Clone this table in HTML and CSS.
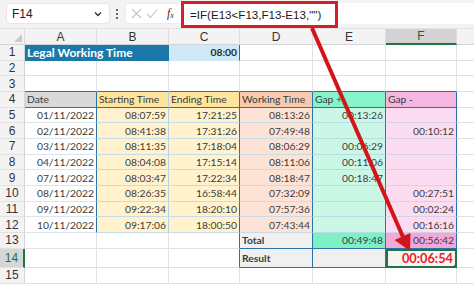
FILE: index.html
```html
<!DOCTYPE html>
<html>
<head>
<meta charset="utf-8">
<link rel="stylesheet" href="styles.css">
</head>
<body>
<div class="app">
  <div class="fbar">
    <div class="namebox">
      <span class="nb-text">F14</span>
      <svg class="chev" width="8" height="6" viewBox="0 0 8 6"><path d="M1 1.5 L4 4.5 L7 1.5" fill="none" stroke="#333" stroke-width="1.4"/></svg>
    </div>
    <svg class="dots" width="4" height="12" viewBox="0 0 4 12"><circle cx="2" cy="2" r="1.1" fill="#444"/><circle cx="2" cy="6" r="1.1" fill="#444"/><circle cx="2" cy="10" r="1.1" fill="#444"/></svg>
    <div class="fxbox">
      <svg width="11" height="11" viewBox="0 0 11 11"><path d="M1 1 L10 10 M10 1 L1 10" stroke="#c4c4c4" stroke-width="1.1"/></svg>
      <svg width="12" height="11" viewBox="0 0 12 11"><path d="M1 6 L4.5 9.5 L11 1.5" fill="none" stroke="#c4c4c4" stroke-width="1.1"/></svg>
      <span class="fx">f<sub>x</sub></span>
    </div>
    <div class="formula">
      <div class="hl"><span class="ftext">=IF(E13&lt;F13,F13-E13,"")</span></div>
    </div>
  </div>

  <div class="sheet">
    <!-- column headers -->
    <div class="corner"><svg width="8" height="8" viewBox="0 0 8 8"><path d="M8 0 L8 8 L0 8 Z" fill="#c9c9c9"/></svg></div>
    <div class="ch">A</div><div class="ch">B</div><div class="ch">C</div><div class="ch">D</div><div class="ch">E</div><div class="ch sel">F</div><div class="ch last"></div>

    <!-- row 1 -->
    <div class="rh">1</div>
    <div class="c title span2">Legal Working Time</div>
    <div class="c lt r b bR">08:00</div>
    <div class="c"></div><div class="c"></div><div class="c"></div><div class="c last"></div>

    <!-- row 2 -->
    <div class="rh">2</div>
    <div class="c"></div><div class="c"></div><div class="c"></div><div class="c"></div><div class="c"></div><div class="c"></div><div class="c last"></div>

    <!-- row 3 -->
    <div class="rh">3</div>
    <div class="c bB"></div><div class="c bB"></div><div class="c bB"></div><div class="c bB"></div><div class="c bB"></div><div class="c bB"></div><div class="c last"></div>

    <!-- row 4 -->
    <div class="rh">4</div>
    <div class="c hdA bR bB">Date</div>
    <div class="c hdY lR bB">Starting Time</div>
    <div class="c hdY bR bB">Ending Time</div>
    <div class="c hdO bR bB">Working Time</div>
    <div class="c hdG bR bB">Gap +</div>
    <div class="c hdP bR bB">Gap -</div>
    <div class="c last"></div>

    <!-- data rows -->
    <div class="rh">5</div>
    <div class="c dA r bR">01/11/2022</div><div class="c dY r lR">08:07:59</div><div class="c dY r bR">17:21:25</div><div class="c dO r bR">08:13:26</div><div class="c dG r bR">00:13:26</div><div class="c dP r bR"></div><div class="c last"></div>

    <div class="rh">6</div>
    <div class="c dA r bR">02/11/2022</div><div class="c dY r lR">08:41:38</div><div class="c dY r bR">17:31:26</div><div class="c dO r bR">07:49:48</div><div class="c dG r bR"></div><div class="c dP r bR">00:10:12</div><div class="c last"></div>

    <div class="rh">7</div>
    <div class="c dA r bR">03/11/2022</div><div class="c dY r lR">08:11:35</div><div class="c dY r bR">17:18:04</div><div class="c dO r bR">08:06:29</div><div class="c dG r bR">00:06:29</div><div class="c dP r bR"></div><div class="c last"></div>

    <div class="rh">8</div>
    <div class="c dA r bR">04/11/2022</div><div class="c dY r lR">08:04:08</div><div class="c dY r bR">17:15:14</div><div class="c dO r bR">08:11:06</div><div class="c dG r bR">00:11:06</div><div class="c dP r bR"></div><div class="c last"></div>

    <div class="rh">9</div>
    <div class="c dA r bR">07/11/2022</div><div class="c dY r lR">08:03:47</div><div class="c dY r bR">17:22:34</div><div class="c dO r bR">08:18:47</div><div class="c dG r bR">00:18:47</div><div class="c dP r bR"></div><div class="c last"></div>

    <div class="rh">10</div>
    <div class="c dA r bR">08/11/2022</div><div class="c dY r lR">08:26:35</div><div class="c dY r bR">16:58:44</div><div class="c dO r bR">07:32:09</div><div class="c dG r bR"></div><div class="c dP r bR">00:27:51</div><div class="c last"></div>

    <div class="rh">11</div>
    <div class="c dA r bR">09/11/2022</div><div class="c dY r lR">09:22:34</div><div class="c dY r bR">18:20:10</div><div class="c dO r bR">07:57:36</div><div class="c dG r bR"></div><div class="c dP r bR">00:02:24</div><div class="c last"></div>

    <div class="rh">12</div>
    <div class="c dA r bR bB">10/11/2022</div><div class="c dY r lR bB">09:17:06</div><div class="c dY r bR bB">18:00:50</div><div class="c dO r bR bB">07:43:44</div><div class="c dG r bR bB"></div><div class="c dP r bR bB">00:16:16</div><div class="c last"></div>

    <!-- row 13 -->
    <div class="rh">13</div>
    <div class="c"></div><div class="c"></div><div class="c bR"></div>
    <div class="c gr b bR bB">Total</div>
    <div class="c tG r bR bB">00:49:48</div>
    <div class="c tP r bR bB">00:56:42</div>
    <div class="c last"></div>

    <!-- row 14 -->
    <div class="rh rsel">14</div>
    <div class="c"></div><div class="c"></div><div class="c bR"></div>
    <div class="c gr b bR bB">Result</div>
    <div class="c gr2 bR bB"></div>
    <div class="c res r">00:06:54<span class="handle"></span></div>
    <div class="c last"></div>

    <!-- row 15 -->
    <div class="rh">15</div>
    <div class="c"></div><div class="c"></div><div class="c"></div><div class="c"></div><div class="c"></div><div class="c"></div><div class="c last"></div>
  </div>

  <svg class="arrow" width="474" height="284" viewBox="0 0 474 284">
    <line x1="312" y1="28" x2="403" y2="237" stroke="#d3141b" stroke-width="4"/>
    <polygon points="410,251 410.5,233 394.5,240" fill="#d3141b"/>
  </svg>
</div>
</body>
</html>
```
FILE: styles.css
```css
* { box-sizing: border-box; }
html, body { margin: 0; padding: 0; }
body {
  width: 474px;
  height: 284px;
  overflow: hidden;
  background: #ffffff;
  font-family: "Liberation Sans", Arial, sans-serif;
}
.app {
  position: relative;
  width: 474px;
  height: 284px;
}

/* formula bar */
.fbar {
  height: 29px;
  background: #f3f3f3;
  display: flex;
  align-items: flex-start;
  padding-top: 3px;
  border-bottom: 1px solid #e3e3e3;
}
.namebox {
  margin-left: 6px;
  width: 104px;
  height: 21px;
  background: #ffffff;
  border: 1px solid #e6e6e6;
  border-radius: 4px;
  display: flex;
  align-items: center;
  justify-content: space-between;
  padding: 0 7px 0 5px;
  font-size: 12px;
  color: #222;
}
.chev { margin-top: 1px; }
.dots {
  margin: 5px 6px 0 5px;
}
.fxbox {
  width: 56px;
  height: 21px;
  background: #ffffff;
  border: 1px solid #ececec;
  border-right: none;
  border-radius: 4px 0 0 4px;
  display: flex;
  align-items: center;
  gap: 4px;
  padding-left: 5px;
}
.fx {
  font-family: "Liberation Serif", "DejaVu Serif", serif;
  font-style: italic;
  font-size: 12px;
  color: #333;
  margin-left: 5px;
}
.fx sub { font-size: 8px; vertical-align: -1px; }
.formula {
  flex: 1;
  height: 21px;
  background: #ffffff;
  position: relative;
}
.hl {
  position: absolute;
  left: 0;
  top: -2px;
  width: 157px;
  height: 27px;
  border: 3px solid #d41f26;
  background: #ffffff;
  display: flex;
  align-items: center;
  padding-left: 6px;
}
.ftext {
  font-size: 11.6px;
  color: #1a1a1a;
  white-space: nowrap;
}

/* sheet grid */
.sheet {
  display: grid;
  grid-template-columns: 25px 72px 72px 71px 73px 73px 71px 17px;
  grid-template-rows: 16px repeat(13, 15.67px) 19px 1fr;
  height: 255px;
  font-family: Lato, "Open Sans", sans-serif;
  font-size: 10.3px;
  color: #3b3b3b;
}
.corner {
  background: #f3f3f3;
  border-right: 1px solid #dedede;
  border-bottom: 1px solid #d4d4d4;
  display: flex;
  align-items: flex-end;
  justify-content: flex-end;
  padding: 0 2px 2px 0;
}
.ch {
  background: #f3f3f3;
  border-right: 1px solid #dedede;
  border-bottom: 1px solid #d4d4d4;
  font-family: "Liberation Sans", Arial, sans-serif;
  font-size: 12px;
  color: #333;
  display: flex;
  align-items: center;
  justify-content: center;
}
.ch.sel {
  background: #d3d3d3;
  border-bottom: 2px solid #217346;
  color: #1f5e3c;
}
.ch.last { border-right: none; }
.rh {
  background: #f3f3f3;
  border-right: 1px solid #d4d4d4;
  border-bottom: 1px solid #e2e2e2;
  font-family: "Liberation Sans", Arial, sans-serif;
  font-size: 12px;
  color: #333;
  display: flex;
  align-items: center;
  justify-content: center;
}
.rh.rsel {
  background: #d6d6d6;
  border-right: 2px solid #217346;
  color: #217346;
}

.c {
  border-right: 1px solid #e1e1e1;
  border-bottom: 1px solid #e1e1e1;
  display: flex;
  align-items: center;
  padding: 0 2px 0 2px;
  white-space: nowrap;
  overflow: hidden;
}
.c.last { border-right: none; }
.r { justify-content: flex-end; }
.b { font-weight: 700; }
.span2 { grid-column: span 2; }

/* borders */
.bR { border-right-color: #2b73a6; }
.lR { border-right-color: #b6d3e6; }
.bB { border-bottom-color: #2b73a6; }

/* fills */
.title {
  background: #1b78ab;
  color: #ffffff;
  font-weight: 700;
  font-size: 12px;
  border-right-color: #1b78ab;
  border-bottom-color: #1b78ab;
}
.lt {
  background: #cfe9f9;
  color: #2a2a2a;
  border-bottom-color: #cfe9f9;
}
.hdA { background: #d9d9d9; }
.hdY { background: #ffe59c; }
.hdO { background: #f8caac; }
.hdG { background: #86f3cb; }
.hdP { background: #f5b6e2; }

.dA { background: #ffffff; border-bottom-color: #d9e6ee; }
.dY { background: #fff2cc; border-bottom-color: #c6dcea; }
.dO { background: #fde3d5; border-bottom-color: #c9dbe7; }
.dG { background: #caf7e6; border-bottom-color: #b9dbe2; }
.dP { background: #fbdcf0; border-bottom-color: #d2d2ea; }

.gr { background: #f0f0f0; }
.gr2 { background: #f0f0f0; }
.tG { background: #7ff0c5; }
.tP { background: #f3a8d8; }

.res {
  position: relative;
  background: #f4f4f4;
  border: 2px solid #217346;
  color: #ee1c25;
  font-weight: 700;
  font-size: 12.8px;
  padding-right: 2px;
}
.handle {
  position: absolute;
  right: -3px;
  bottom: -3px;
  width: 5px;
  height: 5px;
  background: #217346;
  border: 1px solid #ffffff;
}

.arrow {
  position: absolute;
  left: 0;
  top: 0;
  pointer-events: none;
}
```
